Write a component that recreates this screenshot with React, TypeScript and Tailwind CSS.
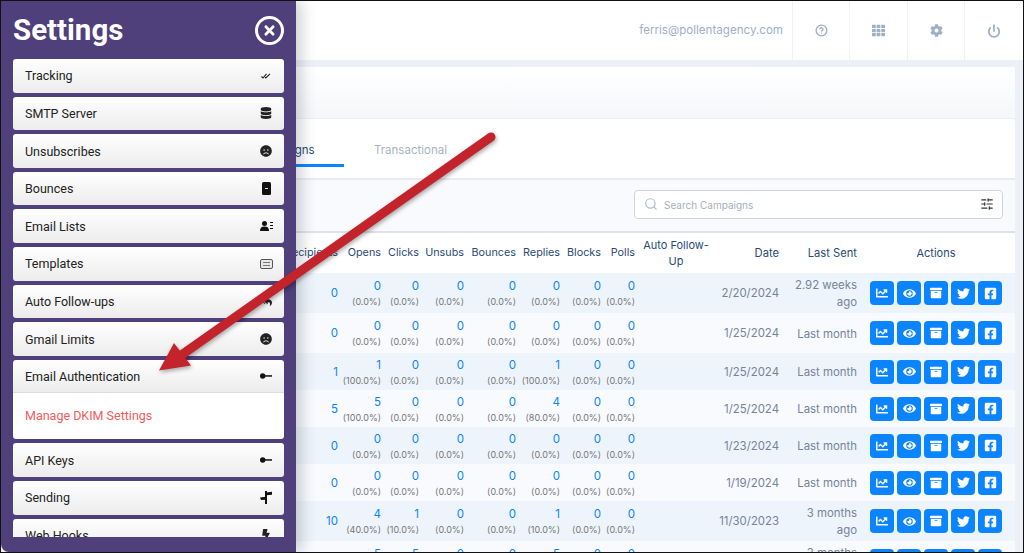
import {
  FaArchive,
  FaBolt,
  FaChartLine,
  FaCog,
  FaDatabase,
  FaEye,
  FaFacebookSquare,
  FaFrown,
  FaReplyAll,
  FaTh,
  FaTimes,
  FaTwitter,
} from "react-icons/fa";
import { FiHelpCircle, FiPower, FiSearch } from "react-icons/fi";
import { SlidersHorizontal } from "lucide-react";

const gridCols =
  "grid grid-cols-[337px_43px_38px_45px_52px_44px_41px_34px_82px_62px_78px_1fr]";

function CheckIcon() {
  return (
    <svg width="10" height="6" viewBox="0 0 10 6" fill="none" stroke="#222" strokeWidth="1.1">
      <path d="M0.5 3.5 L2 5 L5.500 0.800" />
      <path d="M4 4.200 L4.800 5 L9 0.800" />
    </svg>
  );
}

function KeyIcon() {
  return (
    <svg width="12" height="6" viewBox="0 0 12 6" fill="#111">
      <circle cx="2.700" cy="3" r="2.700" />
      <rect x="4" y="2.200" width="8" height="1.500" />
    </svg>
  );
}

function TabletIcon() {
  return (
    <svg width="9" height="13" viewBox="0 0 9 13">
      <rect width="9" height="13" rx="1.500" fill="#111" />
      <rect x="3" y="6" width="3" height="1" fill="#ddd" />
    </svg>
  );
}

function ContactsIcon() {
  return (
    <svg width="13" height="10" viewBox="0 0 13 10" fill="#111">
      <circle cx="4.500" cy="2.500" r="2.500" />
      <path d="M0 10c0-3 1.500-4.400 4.500-4.400S9 7 9 10z" />
      <rect x="10" y="1" width="3" height="1" />
      <rect x="10" y="4" width="3" height="1" />
      <rect x="10" y="7" width="3" height="1" />
    </svg>
  );
}

function TemplateIcon() {
  return (
    <svg width="13" height="10" viewBox="0 0 13 10" fill="none" stroke="#555">
      <rect x="0.500" y="0.500" width="12" height="9" rx="1.500" fill="#e8e8e8" />
      <path d="M3 3.500h7M3 6.500h7" stroke="#777" />
    </svg>
  );
}

function SignIcon() {
  return (
    <svg width="12" height="13" viewBox="0 0 12 13" fill="#111">
      <rect x="5" y="0" width="2" height="13" />
      <path d="M6 1.500l6-.800v3l-6 .500z" />
      <path d="M0 6.500l6-.700v3l-5 .200z" />
    </svg>
  );
}

const menu = [
  { label: "Tracking", icon: <CheckIcon /> },
  { label: "SMTP Server", icon: <FaDatabase size={12} /> },
  { label: "Unsubscribes", icon: <FaFrown size={12} /> },
  { label: "Bounces", icon: <TabletIcon /> },
  { label: "Email Lists", icon: <ContactsIcon /> },
  { label: "Templates", icon: <TemplateIcon /> },
  { label: "Auto Follow-ups", icon: <FaReplyAll size={11} /> },
  { label: "Gmail Limits", icon: <FaFrown size={12} /> },
];

type Row = {
  recipients: string;
  stats: [string, string][];
  date: string;
  sent: string[];
  h: string;
};

const zero: [string, string] = ["0", "(0.0%)"];

const rows: Row[] = [
  { recipients: "0", stats: [zero, zero, zero, zero, zero, zero, zero], date: "2/20/2024", sent: ["2.92 weeks", "ago"], h: "h-[40px] bg-[#eef4fb]" },
  { recipients: "0", stats: [zero, zero, zero, zero, zero, zero, zero], date: "1/25/2024", sent: ["Last month"], h: "h-[40px] bg-[#f8fafe]" },
  { recipients: "1", stats: [["1", "(100.0%)"], zero, zero, zero, ["1", "(100.0%)"], zero, zero], date: "1/25/2024", sent: ["Last month"], h: "h-[37px] bg-[#eef4fb]" },
  { recipients: "5", stats: [["5", "(100.0%)"], zero, zero, zero, ["4", "(80.0%)"], zero, zero], date: "1/25/2024", sent: ["Last month"], h: "h-[37px] bg-[#f8fafe]" },
  { recipients: "0", stats: [zero, zero, zero, zero, zero, zero, zero], date: "1/23/2024", sent: ["Last month"], h: "h-[37px] bg-[#eef4fb]" },
  { recipients: "0", stats: [zero, zero, zero, zero, zero, zero, zero], date: "1/19/2024", sent: ["Last month"], h: "h-[37px] bg-[#f8fafe]" },
  { recipients: "10", stats: [["4", "(40.0%)"], ["1", "(10.0%)"], zero, zero, ["1", "(10.0%)"], zero, zero], date: "11/30/2023", sent: ["3 months", "ago"], h: "h-[40px] bg-[#eef4fb]" },
  { recipients: "5", stats: [["5", "(100.0%)"], ["5", "(100.0%)"], zero, zero, ["5", "(100.0%)"], zero, zero], date: "11/30/2023", sent: ["3 months", "ago"], h: "h-[40px] bg-[#f8fafe]" },
];

const heads = ["Recipients", "Opens", "Clicks", "Unsubs", "Bounces", "Replies", "Blocks", "Polls"];

function ActionButton({ children }: { children: React.ReactNode }) {
  return (
    <div className="flex h-[24px] w-[24px] items-center justify-center rounded-[4px] bg-[#0a84ff] text-white">
      {children}
    </div>
  );
}

function MenuItem({ label, icon }: { label: string; icon: React.ReactNode }) {
  return (
    <div className="mb-[4px] flex h-[33.6px] shrink-0 items-center justify-between rounded-[3px] bg-gradient-to-b from-white to-[#ececec] pl-[12px] pr-[11px] text-[12.5px] text-[#222]">
      <span className="pt-[2px]">{label}</span>
      <span className="flex w-[14px] justify-center">{icon}</span>
    </div>
  );
}

export default function App() {
  return (
    <div className="relative h-[553px] w-[1024px] overflow-hidden border border-[#111] bg-[#edf1f7] font-['Inter',sans-serif]">
      <div className="flex h-[59px] items-stretch justify-end bg-white text-[#9fb0c6]">
        <div className="mr-[9px] flex items-center text-[11.6px] text-[#9fb0c6]">ferris@pollentagency.com</div>
        <div className="flex w-[57px] items-center justify-center border-l border-[#eef1f6]"><FiHelpCircle size={13} strokeWidth={2.4} /></div>
        <div className="flex w-[58px] items-center justify-center border-l border-[#eef1f6]"><FaTh size={13} /></div>
        <div className="flex w-[57px] items-center justify-center border-l border-[#eef1f6]"><FaCog size={13} /></div>
        <div className="flex w-[59px] items-center justify-center border-l border-[#eef1f6]"><FiPower size={14} strokeWidth={3} /></div>
      </div>

      <div className="mr-[8px] mt-[7px] h-[51px] bg-gradient-to-b from-white to-[#f5f7fa]" />

      <div className="mr-[8px] mt-[1px] rounded-t-[3px] bg-white">
        <div className="flex h-[61px] items-start border-b-2 border-[#e8ecf2] pl-[223px] pt-[16px] text-[11.5px]">
          <div className="flex h-[32px] w-[120px] items-center justify-center border-b-[3px] border-[#0a84ff] pt-[2px] text-[#2a4a75]">Campaigns</div>
          <div className="flex h-[29px] items-center pl-[30px] pt-[2px] text-[#a9b3c1]">Transactional</div>
        </div>

        <div className="flex h-[53px] items-center justify-end border-b-2 border-[#dfe3e9] bg-[#f8fafd] pb-[3px] pr-[12px]">
          <div className="flex h-[29px] w-[369px] items-center rounded-[4px] border border-[#cfd5dd] bg-white pl-[9px] pr-[8px]">
            <FiSearch size={14} className="text-[#a9bcd0]" />
            <span className="ml-[6px] flex-1 pt-[2px] text-[10px] text-[#a8afb8]">Search Campaigns</span>
            <SlidersHorizontal size={14} className="text-[#333]" />
          </div>
        </div>

        <div className={`${gridCols} h-[40px] items-center text-[10.8px] text-[#2a4a75]`}>
          {heads.map((h) => (
            <div key={h} className="text-right">{h}</div>
          ))}
          <div className="text-center text-[11px] leading-[16px]">Auto Follow-<br />Up</div>
          <div className="text-right text-[11.2px]">Date</div>
          <div className="text-right text-[11.2px]">Last Sent</div>
          <div className="pl-[13px] pr-[13px] text-center text-[11px]">Actions</div>
        </div>

        {rows.map((row, i) => (
          <div key={i} className={`${gridCols} ${row.h} items-center`}>
            <div className="pt-[2px] text-right text-[11.5px] text-[#0a84ff]">{row.recipients}</div>
            {row.stats.map((s, j) => (
              <div key={j} className="pt-[2px] text-right leading-[15px]">
                <div className="text-[11.5px] text-[#0a84ff]">{s[0]}</div>
                <div className="text-[9px] text-[#777]">{s[1]}</div>
              </div>
            ))}
            <div />
            <div className="pt-[2px] text-right text-[11.4px] text-[#75849a]">{row.date}</div>
            <div className="pt-[2px] text-right text-[11.4px] leading-[17px] text-[#75849a]">
              {row.sent.map((t) => (
                <div key={t}>{t}</div>
              ))}
            </div>
            <div className="flex gap-[3px] pl-[13px]">
              <ActionButton><FaChartLine size={12} /></ActionButton>
              <ActionButton><FaEye size={13} /></ActionButton>
              <ActionButton><FaArchive size={12} /></ActionButton>
              <ActionButton><FaTwitter size={13} /></ActionButton>
              <ActionButton><FaFacebookSquare size={13} /></ActionButton>
            </div>
          </div>
        ))}
      </div>

      {/* settings drawer sits over the page */}
      <div className="absolute bottom-0 left-0 top-0 flex w-[295px] flex-col rounded-bl-[8px] bg-[#4f3f7b] pb-[15px] pl-[12px] pr-[12px] font-['Roboto',sans-serif] shadow-[6px_0_14px_rgba(40,50,70,0.22)]">
        <div className="flex h-[58px] shrink-0 items-center justify-between">
          <span className="pt-[1px] text-[29.5px] font-bold text-white">Settings</span>
          <span className="flex h-[29px] w-[29px] items-center justify-center rounded-full border-[3px] border-white text-white">
            <FaTimes size={15} />
          </span>
        </div>
        <div className="flex min-h-0 flex-1 flex-col overflow-hidden">
          {menu.map((m) => (
            <MenuItem key={m.label} label={m.label} icon={m.icon} />
          ))}
          <div className="mb-[4px] flex h-[33.6px] shrink-0 items-center justify-between rounded-t-[3px] border-b border-[#ddd] bg-gradient-to-b from-white to-[#ececec] pl-[12px] pr-[11px] text-[12.5px] text-[#222]">
            <span className="pt-[2px]">Email Authentication</span>
            <span className="flex w-[14px] justify-center"><KeyIcon /></span>
          </div>
          <div className="-mt-[4px] mb-[4px] flex h-[46px] shrink-0 items-center rounded-b-[3px] bg-white pl-[12px] text-[12.5px] text-[#f25c5c]">
            Manage DKIM Settings
          </div>
          <MenuItem label="API Keys" icon={<KeyIcon />} />
          <MenuItem label="Sending" icon={<SignIcon />} />
          <MenuItem label="Web Hooks" icon={<FaBolt size={12} />} />
        </div>
      </div>

      {/* annotation arrow drawn on the screenshot */}
      <svg className="absolute left-0 top-0 drop-shadow-[1px_2px_2px_rgba(0,0,0,0.35)]" width="1024" height="553" fill="#c3242b">
        <line x1="490" y1="136" x2="179" y2="355" stroke="#c3242b" strokeWidth="9" strokeLinecap="round" />
        <path d="M158 369.500 L173 342 L190 364.500 Z" />
      </svg>
    </div>
  );
}
